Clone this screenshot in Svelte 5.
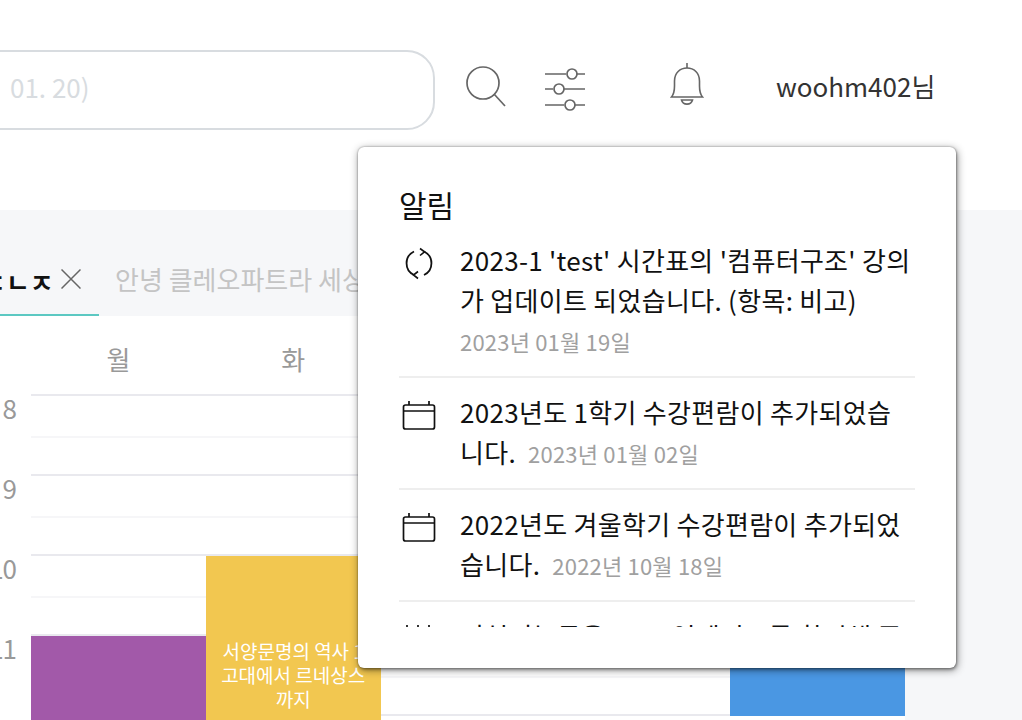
<script>
    const notices = [
        {
            id: 1,
            icon: "refresh",
            text: "2023-1 'test' 시간표의 '컴퓨터구조' 강의가 업데이트 되었습니다. (항목: 비고)",
            date: "2023년 01월 19일",
            block: true,
        },
        {
            id: 2,
            icon: "calendar",
            text: "2023년도 1학기 수강편람이 추가되었습니다.",
            date: "2023년 01월 02일",
        },
        {
            id: 3,
            icon: "calendar",
            text: "2022년도 겨울학기 수강편람이 추가되었습니다.",
            date: "2022년 10월 18일",
        },
        {
            id: 4,
            icon: "people",
            text: "피처기능들을 SNU 업데이트를 확인해 주세요.",
            date: "2022년 10월 02일",
        },
    ];

    const days = ["월", "화", "수", "목", "금"];
    const hours = [8, 9, 10, 11, 12, 13];
</script>

<div class="page">
    <header class="header">
        <div class="search">01. 20)</div>
        <button class="icon-btn search-btn" aria-label="검색">
            <svg width="42" height="44" viewBox="0 0 42 44" fill="none" stroke="#666" stroke-width="1.7">
                <circle cx="18" cy="18" r="16" />
                <path d="M29 29 L40 41" />
            </svg>
        </button>
        <button class="icon-btn filter-btn" aria-label="필터">
            <svg width="42" height="46" viewBox="0 0 42 46" fill="none" stroke="#666" stroke-width="1.7">
                <path d="M1 7 H22 M33 7 H41 M1 22 H9 M20 22 H41 M1 38 H20 M31 38 H41" />
                <circle cx="28" cy="7" r="5" />
                <circle cx="15" cy="22" r="5" />
                <circle cx="26" cy="38" r="5" />
            </svg>
        </button>
        <button class="icon-btn bell-btn" aria-label="알림">
            <svg width="34" height="46" viewBox="0 0 34 46" fill="none" stroke="#666" stroke-width="1.6">
                <path d="M17 1 V6" />
                <path d="M1.5 35 H32.5 C30 32 29.5 29 29.5 24 V19 C29.5 11 24 6 17 6 C10 6 4.5 11 4.5 19 V24 C4.5 29 4 32 1.5 35 Z" />
                <path d="M11.5 38 H22.5 C21 43.5 13 43.5 11.5 38 Z" />
            </svg>
        </button>
        <span class="user">woohm402님</span>
    </header>

    <section class="content">
        <nav class="tabs">
            <div class="tab active">
                <span class="tab-name">ㄷㄴㅈ</span>
                <svg width="20" height="20" viewBox="0 0 20 20" fill="none" stroke="#666" stroke-width="1.5">
                    <path d="M0.5 0.5 L19.5 19.5 M19.5 0.5 L0.5 19.5" />
                </svg>
            </div>
            <div class="tab">안녕 클레오파트라 세상에서 제일가는 포테이토칩</div>
        </nav>

        <div class="table">
            <div class="day-row">
                <span></span>
                {#each days as day}
                    <span class="day">{day}</span>
                {/each}
            </div>
            <div class="grid">
                {#each hours as hour, row}
                    <div class="time" style="grid-row: {row + 1}"><span>{hour}</span></div>
                    {#each days as day, col}
                        <div class="cell" style="grid-row: {row + 1}; grid-column: {col + 2}"><div class="half"></div></div>
                    {/each}
                {/each}
                <div class="event purple"></div>
                <div class="event yellow">서양문명의 역사 1 고대에서 르네상스 까지</div>
                <div class="event blue"></div>
            </div>
        </div>
    </section>

    <aside class="popup">
        <h2 class="popup-title">알림</h2>
        <ul class="list">
            {#each notices as notice (notice.id)}
                <li class="notice">
                    <span class="notice-icon">
                        {#if notice.icon === "refresh"}
                            <svg width="34" height="34" viewBox="0 0 34 34" fill="none" stroke="#111" stroke-width="1.8">
                                <path d="M12 4.5 A13 13 0 0 0 12 28" />
                                <path d="M22 28 A13 13 0 0 0 22 4.5" />
                                <path d="M18 1.5 L22.5 4.8 L18 8.5" stroke-width="1.6" />
                                <path d="M16 24.5 L11.5 28 L16 31.5" stroke-width="1.6" />
                            </svg>
                        {:else if notice.icon === "calendar"}
                            <svg width="34" height="32" viewBox="0 0 34 32" fill="none" stroke="#111" stroke-width="1.7">
                                <rect x="1.5" y="6" width="31" height="24" rx="2" />
                                <path d="M1.5 12 H32.5 M7 2 V6 M27 2 V6" />
                            </svg>
                        {:else}
                            <svg width="34" height="32" viewBox="0 0 34 32" fill="none" stroke="#111" stroke-width="1.7">
                                <path d="M5 2 V20 M16 2 V20 M27 2 V20" />
                            </svg>
                        {/if}
                    </span>
                    <p class="notice-text">
                        {notice.text}
                        <span class="date" class:block={notice.block}>{notice.date}</span>
                    </p>
                </li>
            {/each}
        </ul>
    </aside>
</div>

<style>
    :global(body) {
        margin: 0;
        background: #fff;
    }

    .page {
        position: relative;
        width: 1022px;
        height: 720px;
        overflow: hidden;
        font-family: "Noto Sans CJK KR", "Noto Sans", sans-serif;
        color: #111;
    }

    .header {
        display: flex;
        align-items: flex-start;
        height: 210px;
        padding-top: 50px;
        box-sizing: border-box;
        background: #fff;
    }

    .search {
        flex: none;
        box-sizing: border-box;
        width: 475px;
        height: 80px;
        margin-left: -40px;
        padding-left: 48px;
        border: 2px solid #d8dce0;
        border-radius: 28px;
        font-size: 26px;
        line-height: 70px;
        color: #d8dce0;
    }

    .icon-btn {
        display: block;
        padding: 0;
        border: 0;
        background: none;
    }

    .icon-btn svg {
        display: block;
    }

    .search-btn {
        margin: 15px 0 0 30px;
    }

    .filter-btn {
        margin: 17px 0 0 37px;
    }

    .bell-btn {
        margin: 12px 0 0 84px;
    }

    .user {
        margin: 17px 0 0 72px;
        font-size: 26px;
        line-height: 38px;
        color: #333;
    }

    .content {
        height: 510px;
        background: #f6f7f9;
    }

    .tabs {
        display: flex;
        height: 106px;
        white-space: nowrap;
    }

    .tab {
        display: flex;
        align-items: center;
        height: 106px;
        box-sizing: border-box;
        padding-top: 30px;
        margin-left: 16px;
        font-size: 26px;
        color: #c4c4c4;
    }

    .tab.active {
        flex: none;
        width: 99px;
        margin-left: 0;
        padding-top: 34px;
        gap: 7px;
        color: #111;
        border-bottom: 2px solid #5cc8c2;
    }

    .tab-name {
        flex: none;
        margin: 4px 0 0 -18px;
        font-weight: 700;
    }

    .table {
        width: 905px;
        height: 404px;
        overflow: hidden;
        background: #fff;
    }

    .day-row {
        display: grid;
        grid-template-columns: 31px repeat(5, 174.8px);
        height: 78px;
        align-items: center;
    }

    .day {
        padding-top: 6px;
        font-size: 26px;
        text-align: center;
        color: #999;
    }

    .grid {
        display: grid;
        grid-template-columns: 31px repeat(5, 174.8px);
        grid-auto-rows: 80px;
    }

    .time {
        grid-column: 1;
        display: flex;
        justify-content: flex-end;
        padding-right: 15px;
        font-size: 26px;
        line-height: 28px;
        letter-spacing: -1px;
        color: #999;
    }

    .cell {
        box-sizing: border-box;
        border-top: 2px solid #e9e9ee;
    }

    .half {
        height: 40px;
        border-bottom: 2px solid #f6f6f8;
    }

    .event {
        display: flex;
        align-items: center;
        justify-content: center;
        margin-top: 2px;
        padding: 0 10px;
        font-size: 19px;
        line-height: 24px;
        text-align: center;
        color: #fff;
    }

    .purple {
        grid-column: 2;
        grid-row: 4 / span 3;
        background: #a259a9;
    }

    .yellow {
        grid-column: 3;
        grid-row: 3 / span 3;
        background: #f2c750;
    }

    .blue {
        grid-column: 6;
        grid-row: 4;
        background: #4a97e3;
        height: 80px;
    }

    .popup {
        position: absolute;
        left: 358px;
        top: 147px;
        width: 598px;
        height: 521px;
        box-sizing: border-box;
        padding: 36px 41px 0;
        background: #fff;
        border-radius: 6px;
        box-shadow:
            0 0 2px rgba(0, 0, 0, 0.4),
            1px 2px 3px rgba(0, 0, 0, 0.25),
            1px 2px 8px rgba(0, 0, 0, 0.45);
    }

    .popup-title {
        margin: 0 0 1px;
        font-size: 30px;
        font-weight: 400;
        line-height: 42px;
        color: #111;
    }

    .list {
        margin: 0;
        padding: 0;
        list-style: none;
        height: 401px;
        overflow: hidden;
        width: 516px;
    }

    .notice {
        display: flex;
        box-sizing: border-box;
        padding: 14px 0 16px;
        border-bottom: 2px solid #eeeeee;
    }

    .notice-icon {
        flex: none;
        width: 61px;
        padding-top: 7px;
        padding-left: 3px;
        box-sizing: border-box;
    }

    .notice-icon svg {
        display: block;
    }

    .notice-text {
        margin: 0;
        padding-right: 4px;
        font-size: 26px;
        line-height: 40px;
        letter-spacing: 0.3px;
    }

    .date {
        margin-left: 6px;
        font-size: 22px;
        line-height: 1;
        letter-spacing: 0.2px;
        color: #a0a0a0;
    }

    .date.block {
        display: block;
        margin: 5px 0 0;
        line-height: 32px;
        height: 35px;
    }
</style>
